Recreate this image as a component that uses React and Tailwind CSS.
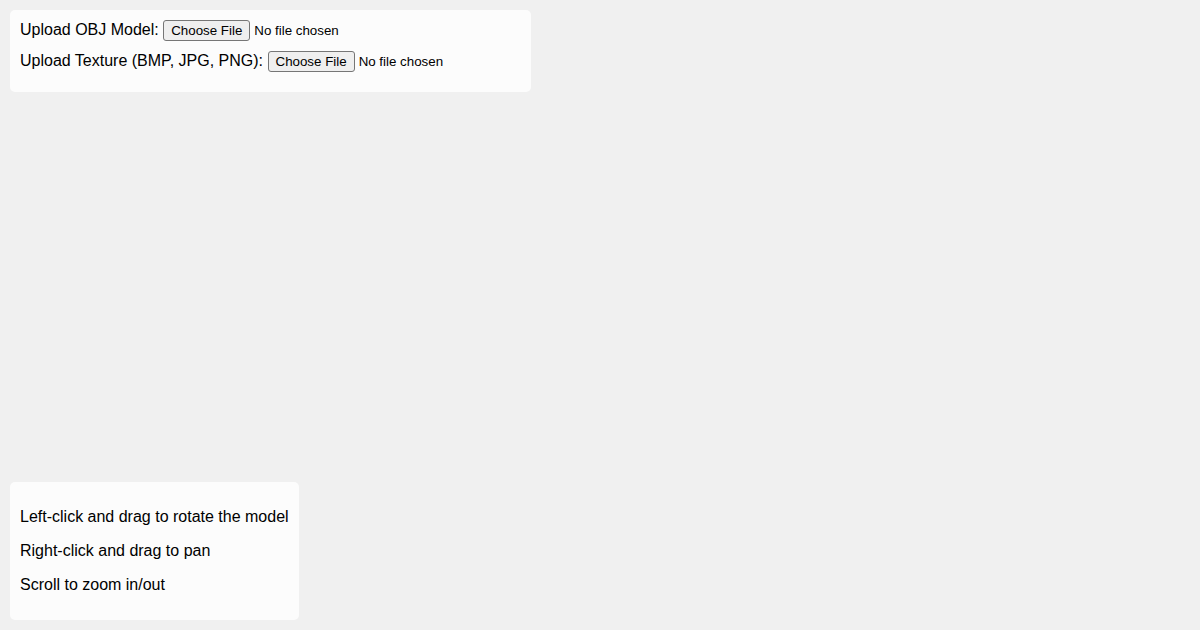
import React from "react";

const fileInput =
  "text-[13.333px] leading-[normal] text-black file:mr-[4px] file:rounded-[3px] file:border file:border-solid file:border-[#767676] file:bg-[#efefef] file:px-[7px] file:py-[2px] file:text-[13.333px] file:leading-[normal] file:text-black";

const App = () => {
  return (
    <div
      className="relative h-[630px] w-[1200px] overflow-hidden bg-[#f0f0f0] text-base leading-[normal] text-black"
      style={{ fontFamily: '"Liberation Sans", Arial, sans-serif' }}
    >
      {/* UPLOAD PANEL */}
      <div className="absolute left-[10px] top-[10px] w-[521px] rounded-[5px] bg-white/80 p-[10px]">
        <div className="mb-[10px]">
          <label>Upload OBJ Model: </label>
          <input type="file" accept=".obj" className={fileInput} />
        </div>
        <div className="mb-[10px]">
          <label>Upload Texture (BMP, JPG, PNG): </label>
          <input type="file" accept=".bmp,.jpg,.jpeg,.png" className={fileInput} />
        </div>
      </div>

      {/* CONTROLS HELP */}
      <div className="absolute bottom-[10px] left-[10px] rounded-[5px] bg-white/80 p-[10px]">
        <p className="my-4">Left-click and drag to rotate the model</p>
        <p className="my-4">Right-click and drag to pan</p>
        <p className="my-4">Scroll to zoom in/out</p>
      </div>
    </div>
  );
};

export default App;
